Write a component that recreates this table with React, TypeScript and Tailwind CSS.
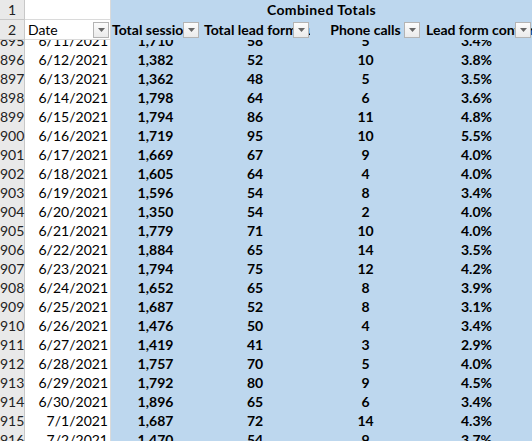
import React from 'react';

type Row = [number, string, string, string, string, string];

const ROWS: Row[] = [
  [896, '6/12/2021', '1,382', '52', '10', '3.8%'],
  [897, '6/13/2021', '1,362', '48', '5', '3.5%'],
  [898, '6/14/2021', '1,798', '64', '6', '3.6%'],
  [899, '6/15/2021', '1,794', '86', '11', '4.8%'],
  [900, '6/16/2021', '1,719', '95', '10', '5.5%'],
  [901, '6/17/2021', '1,669', '67', '9', '4.0%'],
  [902, '6/18/2021', '1,605', '64', '4', '4.0%'],
  [903, '6/19/2021', '1,596', '54', '8', '3.4%'],
  [904, '6/20/2021', '1,350', '54', '2', '4.0%'],
  [905, '6/21/2021', '1,779', '71', '10', '4.0%'],
  [906, '6/22/2021', '1,884', '65', '14', '3.5%'],
  [907, '6/23/2021', '1,794', '75', '12', '4.2%'],
  [908, '6/24/2021', '1,652', '65', '8', '3.9%'],
  [909, '6/25/2021', '1,687', '52', '8', '3.1%'],
  [910, '6/26/2021', '1,476', '50', '4', '3.4%'],
  [911, '6/27/2021', '1,419', '41', '3', '2.9%'],
  [912, '6/28/2021', '1,757', '70', '5', '4.0%'],
  [913, '6/29/2021', '1,792', '80', '9', '4.5%'],
  [914, '6/30/2021', '1,896', '65', '6', '3.4%'],
  [915, '7/1/2021', '1,687', '72', '14', '4.3%'],
  [916, '7/2/2021', '1,470', '54', '9', '3.7%'],
];

const COLS = 'grid grid-cols-[25px_86px_89px_110px_111px_111px]';

// little filter arrow button sitting in the header cells
function FilterButton() {
  return (
    <span className="absolute right-[1px] top-[2px] flex h-[16px] w-[16px] items-center justify-center border border-[#b4b4b4] bg-gradient-to-b from-[#fcfcfc] to-[#ebebeb]">
      <svg width="7" height="4" viewBox="0 0 7 4">
        <path d="M0 0h7L3.5 4z" fill="#666" />
      </svg>
    </span>
  );
}

function DataRow({ r }: { r: Row }) {
  return (
    <div className={`${COLS} h-[19px] text-[14px] leading-[19px]`}>
      <div className="border-b border-r border-[#c8c8c8] bg-[#e9e9e9] text-center text-[#222]">{r[0]}</div>
      <div className="border-b border-r border-[#dadada] bg-white pr-[2px] text-right">{r[1]}</div>
      <div className="bg-[#bdd7ee] text-center font-bold">{r[2]}</div>
      <div className="bg-[#bdd7ee] text-center font-bold">{r[3]}</div>
      <div className="bg-[#bdd7ee] text-center font-bold">{r[4]}</div>
      <div className="bg-[#bdd7ee] text-center font-bold">{r[5]}</div>
    </div>
  );
}

export default function App() {
  return (
    <div
      className="h-[441px] w-[532px] overflow-hidden bg-white text-black"
      style={{ fontFamily: 'Lato, "Liberation Sans", sans-serif' }}
    >
      {/* row 1 */}
      <div className={`${COLS} h-[20px] text-[14px] leading-[19px]`}>
        <div className="border-b border-r border-[#c8c8c8] bg-[#e9e9e9] text-center text-[#222]">1</div>
        <div className="border-b border-r border-[#dadada] bg-white" />
        <div className="col-span-4 bg-[#bdd7ee] text-center font-bold tracking-[0.4px]">Combined Totals</div>
      </div>

      {/* row 2: headers */}
      <div className={`${COLS} h-[20px] text-[14px] leading-[19px]`}>
        <div className="border-b border-r border-[#c8c8c8] bg-[#e9e9e9] text-center text-[#222]">2</div>
        <div className="relative border-b border-r border-[#dadada] bg-white pl-[3px]">
          Date
          <FilterButton />
        </div>
        <div className="relative overflow-hidden whitespace-nowrap bg-[#bdd7ee] pl-[1px] font-bold">
          Total sessions
          <FilterButton />
        </div>
        <div className="relative overflow-hidden whitespace-nowrap bg-[#bdd7ee] pl-[4px] font-bold">
          Total lead form submissions
          <FilterButton />
        </div>
        <div className="relative overflow-hidden whitespace-nowrap bg-[#bdd7ee] text-center font-bold">
          Phone calls
          <FilterButton />
        </div>
        <div className="relative overflow-hidden whitespace-nowrap bg-[#bdd7ee] pl-[5px] font-bold">
          Lead form conversion rate
          <FilterButton />
        </div>
      </div>

      {/* row 895, scrolled so only its lower part shows */}
      <div className="h-[10px] overflow-hidden">
        <div className="-mt-[9px]">
          <DataRow r={[895, '6/11/2021', '1,710', '58', '5', '3.4%']} />
        </div>
      </div>

      {ROWS.map((r) => (
        <DataRow key={r[0]} r={r} />
      ))}
    </div>
  );
}
